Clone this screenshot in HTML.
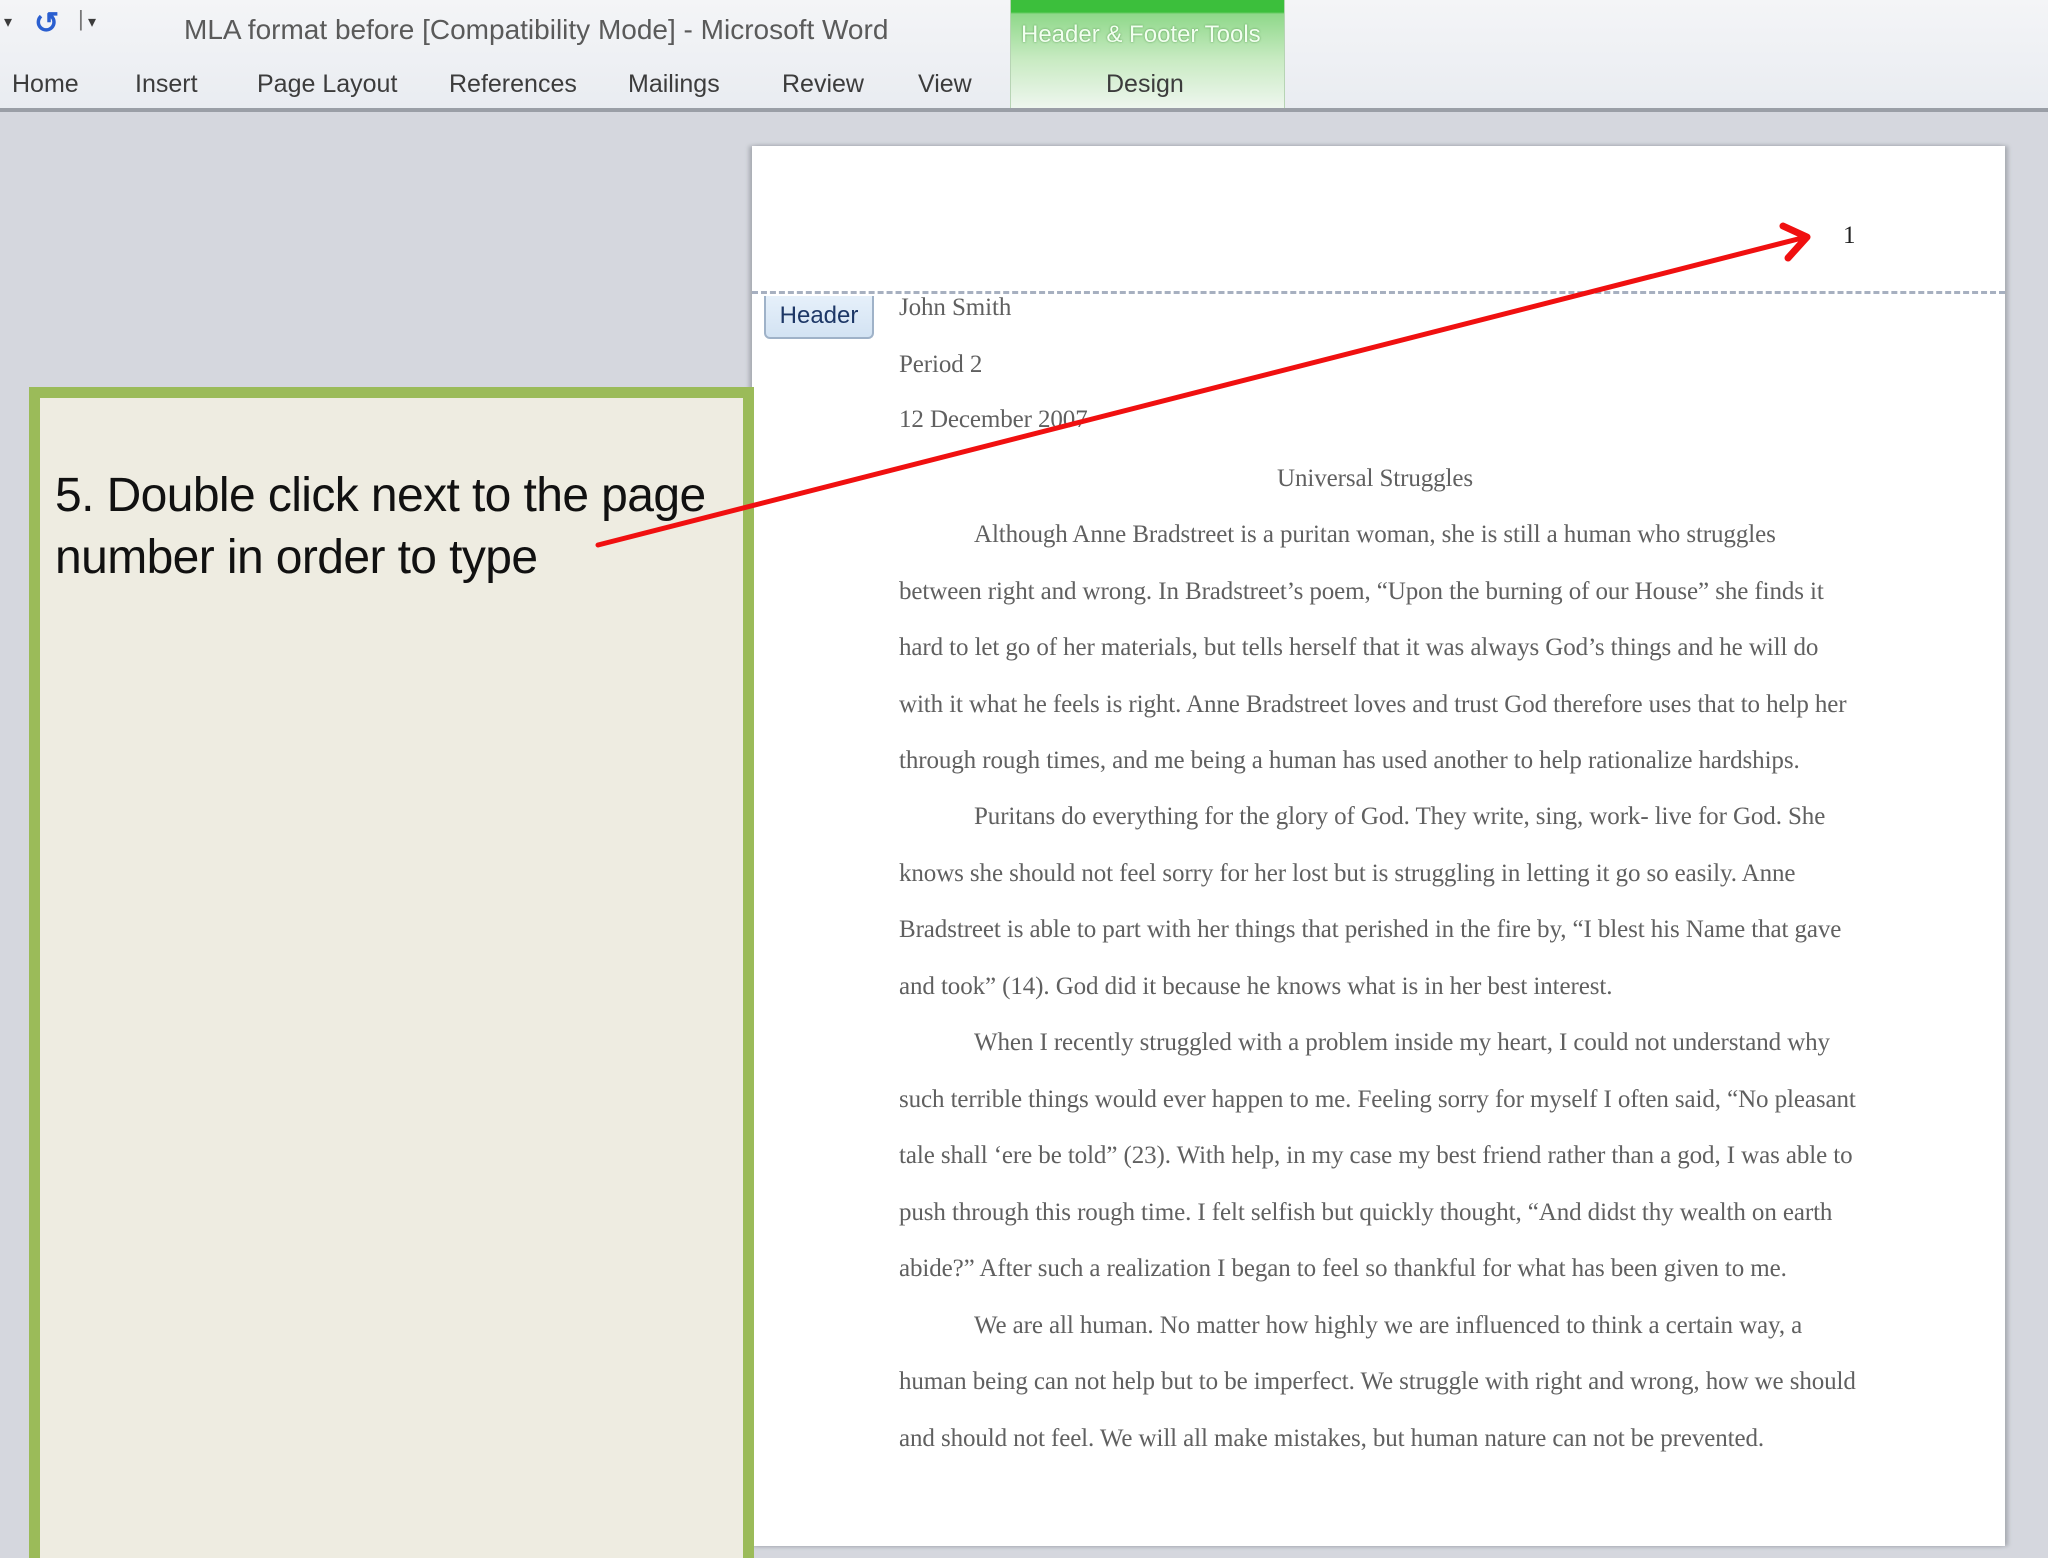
<!DOCTYPE html>
<html><head><meta charset="utf-8"><style>
body{margin:0;width:2048px;height:1536px;overflow:hidden;background:#d5d7de;position:relative;font-family:"Liberation Sans",sans-serif}
.rib{position:absolute;left:0;top:0;width:2048px;height:108px;background:linear-gradient(#f4f5f7,#e9ecf1);border-bottom:4px solid #9a9ea6}
.t{position:absolute;color:#3c3c3c;font-size:25px;white-space:nowrap}
.ctx{position:absolute;left:1010px;top:0;width:273px;height:108px;background:linear-gradient(#3cbf3c 0,#3cbf3c 12px,#8fd88a 14px,#c9ebc3 60px,#eef6ee 108px);border-left:1px solid #b7d4b4;border-right:1px solid #b7d4b4}
.page{position:absolute;left:752px;top:146px;width:1253px;height:1400px;background:#fff;box-shadow:-3px 0 4px #a8abb2,3px 0 4px #a8abb2}
.dash{position:absolute;left:752px;top:291px;width:1253px;border-top:3px dashed #a7b0c0}
.htab{position:absolute;left:764px;top:296px;width:106px;height:41px;border:2px solid #9fb2c8;border-top:none;border-radius:0 0 6px 6px;background:linear-gradient(#e6f0fa,#d3e3f3);color:#1d3766;font-size:24px;text-align:center;line-height:40px}
.p{position:absolute;left:899px;font-family:"Liberation Serif",serif;font-size:25px;color:#606060;white-space:nowrap;letter-spacing:-0.1px;margin-top:4px}
.box{position:absolute;left:29px;top:387px;width:703px;height:1160px;background:#eeece1;border:11px solid #9bbb59;border-bottom:none}
.bt{position:absolute;left:55px;font-size:48px;color:#111;white-space:nowrap;letter-spacing:-0.6px}
</style></head><body>
<div class="rib"></div>
<div class="ctx"></div>
<div class="t" style="left:4px;top:12px;font-size:16px">▾</div>
<div class="t" style="left:34px;top:6px;font-size:30px;color:#2a5fd0;font-weight:bold">↺</div>
<div class="t" style="left:78px;top:6px;font-size:22px;color:#777">|</div>
<div class="t" style="left:88px;top:12px;font-size:16px">▾</div>
<div class="t" style="left:184px;top:14px;font-size:28px;color:#5a5a5a">MLA format before [Compatibility Mode]  -  Microsoft Word</div>
<div class="t" style="left:1021px;top:21px;font-size:24px;color:#f2fff0;text-shadow:0 0 2px #5a9a55">Header &amp; Footer Tools</div>
<div class="t" style="left:12px;top:70px">Home</div>
<div class="t" style="left:135px;top:70px">Insert</div>
<div class="t" style="left:257px;top:70px">Page Layout</div>
<div class="t" style="left:449px;top:70px">References</div>
<div class="t" style="left:628px;top:70px">Mailings</div>
<div class="t" style="left:782px;top:70px">Review</div>
<div class="t" style="left:918px;top:70px">View</div>
<div class="t" style="left:1106px;top:70px">Design</div>
<div class="page"></div>
<div class="dash"></div>
<div class="htab">Header</div>
<div class="p" style="left:1843px;top:218px;color:#222">1</div>
<div class="p" style="top:290px">John Smith</div>
<div class="p" style="top:347px">Period 2</div>
<div class="p" style="top:402px">12 December 2007</div>
<div class="p" style="left:1277px;top:461px">Universal Struggles</div>
<div class="p" style="left:974px;top:517px">Although Anne Bradstreet is a puritan woman, she is still a human who struggles</div>
<div class="p" style="top:574px">between right and wrong. In Bradstreet’s poem, “Upon the burning of our House” she finds it</div>
<div class="p" style="top:630px">hard to let go of her materials, but tells herself that it was always God’s things and he will do</div>
<div class="p" style="top:687px">with it what he feels is right. Anne Bradstreet loves and trust God therefore uses that to help her</div>
<div class="p" style="top:743px">through rough times, and me being a human has used another to help rationalize hardships.</div>
<div class="p" style="left:974px;top:799px">Puritans do everything for the glory of God. They write, sing, work- live for God. She</div>
<div class="p" style="top:856px">knows she should not feel sorry for her lost but is struggling in letting it go so easily. Anne</div>
<div class="p" style="top:912px">Bradstreet is able to part with her things that perished in the fire by, “I blest his Name that gave</div>
<div class="p" style="top:969px">and took” (14).  God did it because he knows what is in her best interest.</div>
<div class="p" style="left:974px;top:1025px">When I recently struggled with a problem inside my heart, I could not understand why</div>
<div class="p" style="top:1082px">such terrible things would ever happen to me. Feeling sorry for myself I often said, “No pleasant</div>
<div class="p" style="top:1138px">tale shall ‘ere be told” (23). With help, in my case my best friend rather than a god, I was able to</div>
<div class="p" style="top:1195px">push through this rough time. I felt selfish but quickly thought, “And didst thy wealth on earth</div>
<div class="p" style="top:1251px">abide?” After such a realization I began to feel so thankful for what has been given to me.</div>
<div class="p" style="left:974px;top:1308px">We are all human. No matter how highly we are influenced to think a certain way, a</div>
<div class="p" style="top:1364px">human being can not help but to be imperfect. We struggle with right and wrong, how we should</div>
<div class="p" style="top:1421px">and should not feel. We will all make mistakes, but human nature can not be prevented.</div>
<div class="box"></div>
<div class="bt" style="top:468px">5. Double click next to the page</div>
<div class="bt" style="top:530px">number in order to type</div>
<svg style="position:absolute;left:0;top:0" width="2048" height="1536">
<g stroke="#f01010" stroke-width="5" fill="none" stroke-linecap="round" stroke-linejoin="round">
<line x1="598" y1="545" x2="1806" y2="237"/>
<polyline points="1783,226 1807,237 1788,258" stroke-width="7"/>
</g></svg>
</body></html>
